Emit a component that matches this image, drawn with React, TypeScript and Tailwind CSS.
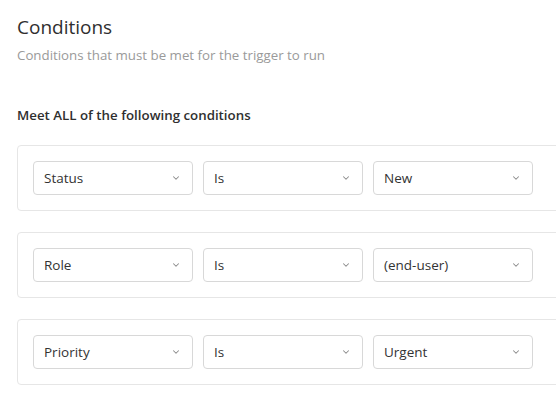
import { ChevronDown } from 'lucide-react';

const rows = [
  ['Status', 'Is', 'New'],
  ['Role', 'Is', '(end-user)'],
  ['Priority', 'Is', 'Urgent'],
];

function Select({ value }: { value: string }) {
  return (
    <div className="flex h-[34px] w-[160px] shrink-0 items-center justify-between rounded-[4px] border border-[#d8d8d8] bg-white pl-[10px] pr-[11px]">
      <span className="text-[13.5px] text-[#333]">{value}</span>
      <ChevronDown className="h-[10px] w-[10px] text-[#8a8a8a]" strokeWidth={2.5} />
    </div>
  );
}

export default function App() {
  return (
    <div
      className="h-[399px] w-[556px] overflow-hidden bg-white pl-[17px] pt-[14px]"
      style={{ fontFamily: '"Open Sans", "Noto Sans", sans-serif' }}
    >
      <h1 className="text-[19px] leading-[26px] text-[#2f2f2f]">Conditions</h1>
      <p className="mt-[6px] text-[13.3px] leading-[18px] text-[#9a9a9a]">
        Conditions that must be met for the trigger to run
      </p>
      <h2 className="mt-[42px] text-[13.3px] font-semibold leading-[18px] text-[#2f2f2f]">
        Meet ALL of the following conditions
      </h2>

      <div className="mt-[21px] flex flex-col gap-[21px]">
        {rows.map((row) => (
          <div
            key={row[0]}
            className="flex w-[560px] gap-[10px] rounded-[4px] border border-[#e6e6e6] px-[15px] py-[15px]"
          >
            {row.map((v, i) => (
              <Select key={i} value={v} />
            ))}
          </div>
        ))}
      </div>
    </div>
  );
}
